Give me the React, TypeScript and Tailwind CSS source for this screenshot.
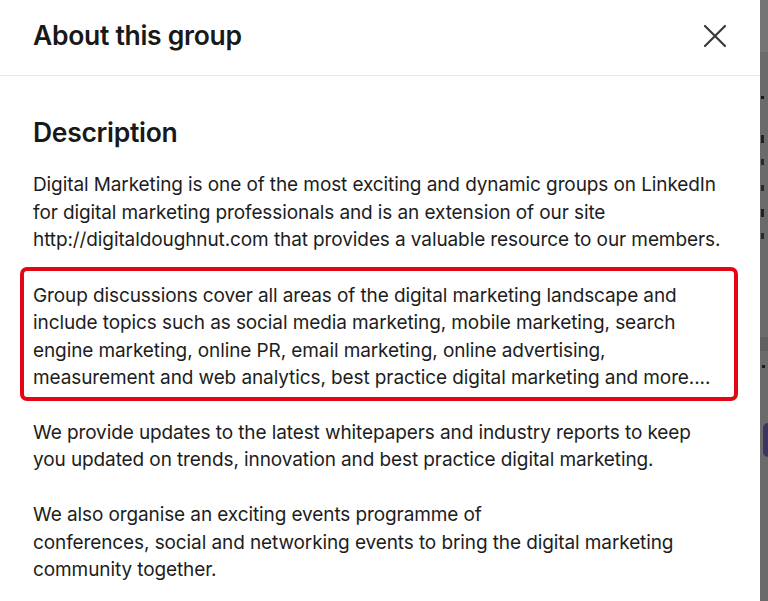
export default function App() {
  return (
    <div
      className="flex h-[601px] w-[768px] overflow-hidden bg-white text-[#1d1d1d]"
      style={{ fontFamily: "Inter, 'Noto Sans', sans-serif" }}
    >
      <div className="flex w-[760px] flex-col bg-white">
        {/* Header */}
        <div className="flex h-[76px] shrink-0 items-center justify-between border-b border-[#e6e6e6] pb-[4px] pl-[33px] pr-[33px]">
          <h1 className="text-[26.5px] font-semibold tracking-[-0.3px] text-[#191919]">
            About this group
          </h1>
          <svg width="24" height="24" viewBox="0 0 24 24" className="text-[#3a3a3a]">
            <path d="M2 2 L22 22 M22 2 L2 22" stroke="currentColor" strokeWidth="2.2" strokeLinecap="round" />
          </svg>
        </div>

        {/* Body */}
        <div className="pt-[40px] text-[19px] leading-[27.5px] tracking-[-0.1px]">
          <h2 className="mb-[23px] pl-[33px] text-[26.5px] font-semibold leading-[32px] tracking-[-0.3px] text-[#191919]">
            Description
          </h2>
          <p className="pl-[33px] whitespace-nowrap">
            Digital Marketing is one of the most exciting and dynamic groups on LinkedIn
            <br />
            for digital marketing professionals and is an extension of our site
            <br />
            http://digitaldoughnut.com that provides a valuable resource to our members.
          </p>
          <div className="ml-[20px] mt-[13px] w-[718px] rounded-[7px] border-[4px] border-[#e30613] pb-[5px] pl-[9px] pt-[11px] whitespace-nowrap">
            Group discussions cover all areas of the digital marketing landscape and
            <br />
            include topics such as social media marketing, mobile marketing, search
            <br />
            engine marketing, online PR, email marketing, online advertising,
            <br />
            measurement and web analytics, best practice digital marketing and more....
          </div>
          <p className="mt-[18px] pl-[33px] whitespace-nowrap">
            We provide updates to the latest whitepapers and industry reports to keep
            <br />
            you updated on trends, innovation and best practice digital marketing.
          </p>
          <p className="mt-[27.5px] pl-[33px] whitespace-nowrap">
            We also organise an exciting events programme of
            <br />
            conferences, social and networking events to bring the digital marketing
            <br />
            community together.
          </p>
        </div>
      </div>

      {/* dimmed page behind the dialog */}
      <div className="flex w-[8px] flex-col bg-[#6b6b6b]">
        <div className="h-[52px] bg-[#757575]" />
        <div className="mt-[44px] ml-[1px] h-[3px] w-[3px] bg-[#1a1a1a]" />
        <div className="mt-[36px] ml-[1px] h-[8px] w-[3px] bg-[#222]" />
        <div className="mt-[16px] ml-[1px] h-[6px] w-[3px] bg-[#2a2a2a]" />
        <div className="mt-[20px] ml-[1px] h-[6px] w-[3px] bg-[#2a2a2a]" />
        <div className="mt-[18px] ml-[1px] h-[8px] w-[3px] bg-[#222]" />
        <div className="mt-[16px] ml-[1px] h-[6px] w-[3px] bg-[#2a2a2a]" />
        <div className="mt-[98px] h-[14px] bg-[#606060]" />
        <div className="mt-[14px] ml-[2px] h-[3px] w-[3px] bg-[#1a1a1a]" />
        <div className="mt-[55px] ml-[3px] h-[34px] w-[5px] rounded-l-full bg-[#3c3560]" />
      </div>
    </div>
  );
}
